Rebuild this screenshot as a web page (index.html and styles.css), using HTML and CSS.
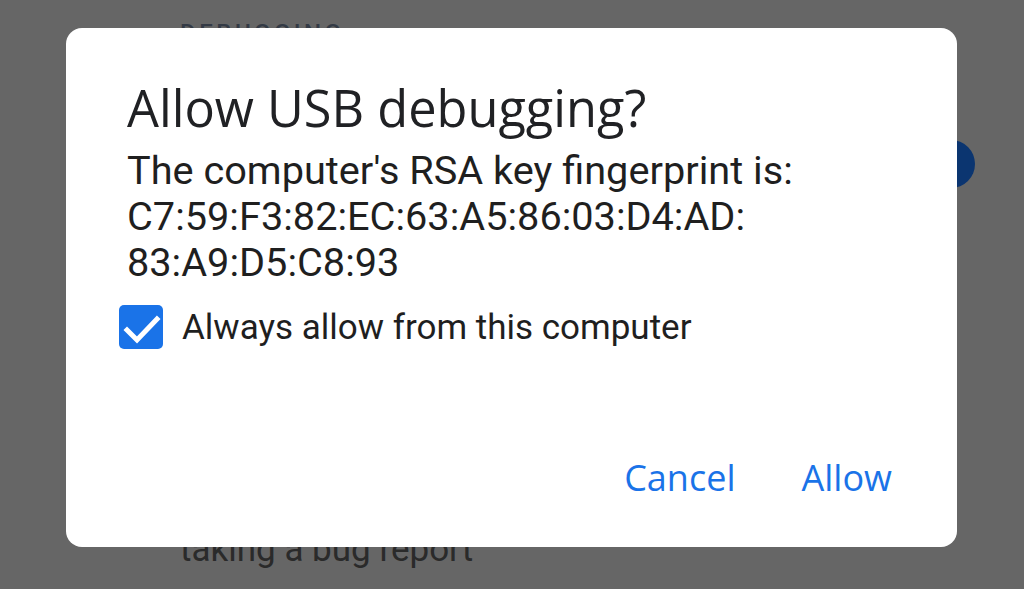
FILE: index.html
```html
<!DOCTYPE html>
<html lang="en">
<head>
<meta charset="UTF-8">
<title>Allow USB debugging?</title>
<link rel="stylesheet" href="styles.css">
</head>
<body>

<div class="settings">
  <div class="section-title">DEBUGGING</div>
  <div class="toggle-row">
    <span class="toggle-knob"></span>
  </div>
  <div class="setting-text">taking a bug report</div>
</div>

<div class="dialog">
  <h1 class="dialog-title">Allow USB debugging?</h1>
  <p class="dialog-body">The computer's RSA key fingerprint is:<br>C7:59:F3:82:EC:63:A5:86:03:D4:AD:<br>83:A9:D5:C8:93</p>

  <label class="remember">
    <svg class="checkbox" width="44" height="44" viewBox="0 0 44 44">
      <rect x="0" y="0" width="44" height="44" rx="5" fill="#1a73e8"/>
      <path d="M8 25 L18 35 L38 14" fill="none" stroke="#fff" stroke-width="5" stroke-linecap="square"/>
    </svg>
    <span>Always allow from this computer</span>
  </label>

  <div class="actions">
    <button class="action-btn">Cancel</button>
    <button class="action-btn">Allow</button>
  </div>
</div>

</body>
</html>
```

FILE: styles.css
```css
body {
  margin: 0;
  padding: 0;
  width: 1024px;
  height: 589px;
  overflow: hidden;
  background: #666666;
  font-family: Roboto, "Liberation Sans", sans-serif;
}

.settings {
  padding: 19px 0 0 180px;
}

.section-title {
  font-size: 24px;
  letter-spacing: 3.5px;
  color: #333a45;
  font-weight: 500;
  line-height: 28px;
}

.toggle-row {
  height: 483px;
  position: relative;
}

.toggle-knob {
  position: absolute;
  left: 747px;
  top: 93px;
  width: 48px;
  height: 48px;
  border-radius: 50%;
  background: #0b3570;
}

.setting-text {
  font-size: 35px;
  color: #2a2a2a;
  line-height: 40px;
}

.dialog {
  position: absolute;
  left: 66px;
  top: 28px;
  width: 891px;
  height: 519px;
  box-sizing: border-box;
  padding: 52px 65px 0 61px;
  background: #fff;
  border-radius: 16px;
  display: flex;
  flex-direction: column;
}

.dialog-title {
  margin: 0;
  font-family: "Open Sans", Roboto, sans-serif;
  font-size: 50.5px;
  font-weight: 500;
  line-height: 56px;
  color: #202124;
}

.dialog-body {
  margin: 12px 0 0;
  font-size: 39.7px;
  line-height: 46px;
  color: #1f1f1f;
}

.remember {
  display: flex;
  align-items: center;
  gap: 19px;
  margin: 19px 0 0 -8px;
  font-size: 35px;
  color: #1f1f1f;
}

.actions {
  margin-top: auto;
  margin-bottom: 47px;
  display: flex;
  justify-content: flex-end;
  gap: 66px;
}

.action-btn {
  border: none;
  background: none;
  padding: 0;
  font-family: "Open Sans", Roboto, sans-serif;
  font-size: 36px;
  font-weight: 500;
  color: #1a73e8;
  line-height: 44px;
  cursor: pointer;
}
```
